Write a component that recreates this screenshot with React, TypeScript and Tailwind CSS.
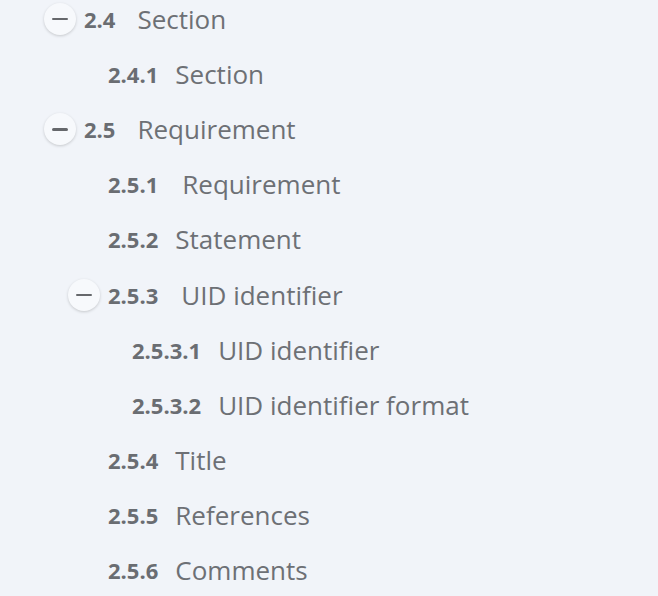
import React from "react";

type Item = {
  num: string;
  label: string;
  depth: number;
  toggle?: boolean;
  gap?: number;
};

const items: Item[] = [
  { num: "2.4", label: "Section", depth: 0, toggle: true, gap: 22 },
  { num: "2.4.1", label: "Section", depth: 1 },
  { num: "2.5", label: "Requirement", depth: 0, toggle: true, gap: 22 },
  { num: "2.5.1", label: "Requirement", depth: 1, gap: 24 },
  { num: "2.5.2", label: "Statement", depth: 1 },
  { num: "2.5.3", label: "UID identifier", depth: 1, toggle: true, gap: 23 },
  { num: "2.5.3.1", label: "UID identifier", depth: 2 },
  { num: "2.5.3.2", label: "UID identifier format", depth: 2 },
  { num: "2.5.4", label: "Title", depth: 1 },
  { num: "2.5.5", label: "References", depth: 1 },
  { num: "2.5.6", label: "Comments", depth: 1 },
];

function Toggle() {
  return (
    <button className="flex h-8 w-8 items-center justify-center rounded-full bg-[#f7f9fc] shadow-[0_1px_3px_rgba(0,0,0,0.18)]">
      <span className="block h-[2.5px] w-[16px] rounded bg-[#66686c]" />
    </button>
  );
}

export default function App() {
  return (
    <div className="h-[596px] w-[658px] overflow-hidden bg-[#f1f4f9] font-['Open_Sans',sans-serif] text-[#6d7075]">
      <ul className="-mt-[8.5px]">
        {items.map((it) => (
          <li
            key={it.num}
            className="flex h-[55.2px] items-center"
            style={{ paddingLeft: 44 + it.depth * 24 }}
          >
            <div className="flex w-8 items-center justify-center">
              {it.toggle && <Toggle />}
            </div>
            <span className="ml-2 text-[22px] font-bold text-[#6a6d72]">{it.num}</span>
            <span className="text-[26px]" style={{ marginLeft: it.gap ?? 17 }}>
              {it.label}
            </span>
          </li>
        ))}
      </ul>
    </div>
  );
}
